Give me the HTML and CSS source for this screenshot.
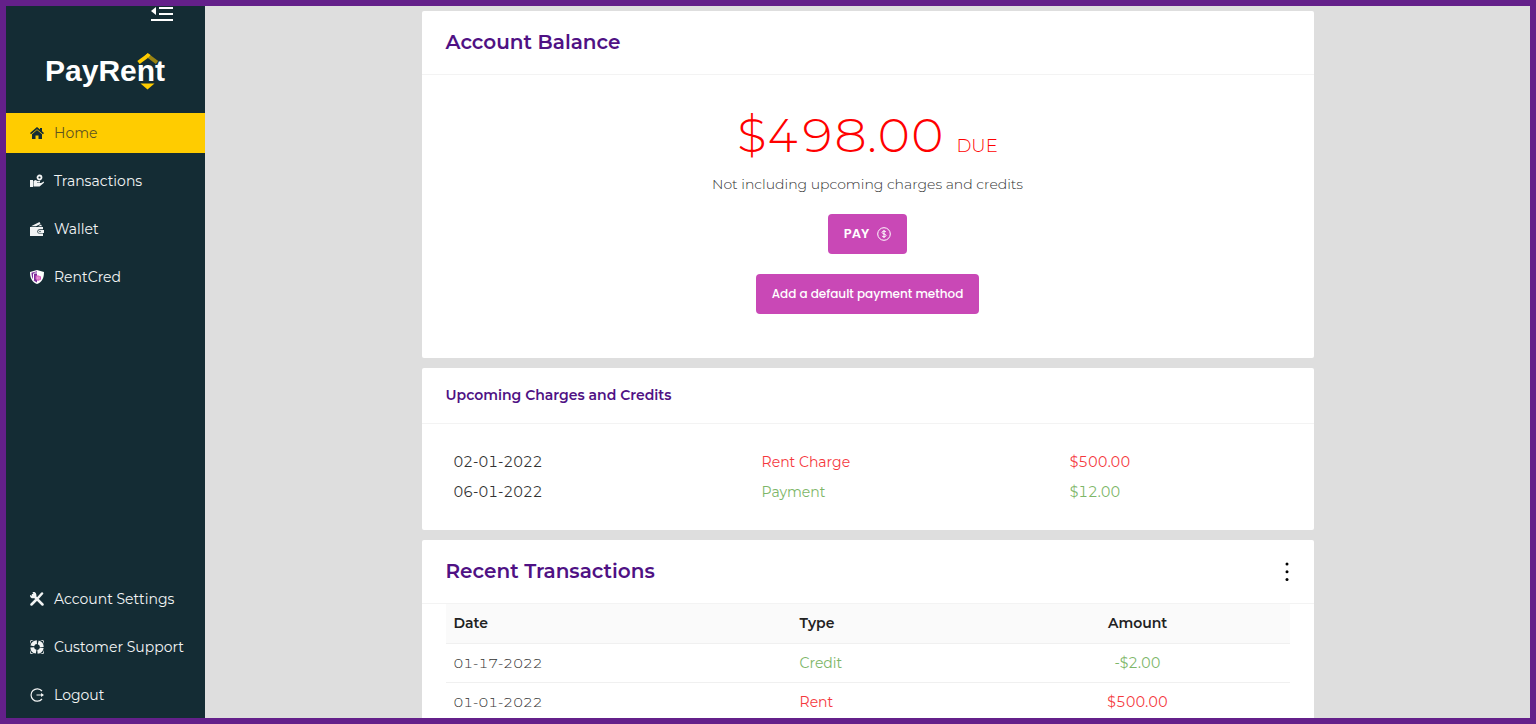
FILE: index.html
```html
<!DOCTYPE html>
<html lang="en">
<head>
    <meta charset="UTF-8">
    <meta name="viewport" content="width=device-width, initial-scale=1.0">
    <title>PayRent</title>
    <link rel="stylesheet" href="styles.css">
</head>
<body>
    <div class="app">
        <aside class="sidebar">
            <button class="collapse" type="button" aria-label="Collapse menu">
                <svg width="22" height="14" viewBox="0 0 22 14">
                    <path d="M0 4l5-4v8z" fill="#fff"/>
                    <path d="M8 1h14M8 7h14M0 13h22" stroke="#fff" stroke-width="2"/>
                </svg>
            </button>

            <a class="logo" href="#">
                <svg width="122" height="38" viewBox="0 0 122 38">
                    <text class="logo-text" x="0" y="28">PayRent</text>
                    <path d="M93.500 9.500l9.500-7" stroke="#ffcc00" stroke-width="4"/>
                    <path d="M102 2l10 7.500" stroke="#9a8412" stroke-width="4"/>
                    <path d="M100 3l2.500-3 3 2-2.500 3z" fill="#ffcc00"/>
                    <path d="M95.500 30.500h14l-7 6z" fill="#ffcc00"/>
                </svg>
            </a>

            <nav class="menu">
                <a class="active" href="#">
                    <svg class="icon" viewBox="0 0 14 14"><path d="M7 1L0 7l1 1.200 6-5 6 5L14 7l-2-1.800V2h-2v1.500z"/><path d="M7 4L2 8.200V13h3.500V9.500h3V13H12V8.200z"/></svg>
                    Home
                </a>
                <a href="#">
                    <svg class="icon" viewBox="0 0 14 14"><path d="M0 6h3v7H0zM3.500 7l2-1 2 1h2.500v1.500H7V9h4l3-1.500c.4 1-.5 1.500-1.500 2.500L9.500 12.500h-6z"/><circle cx="9.500" cy="3.500" r="2" fill="none" stroke="currentColor" stroke-width="1.800"/></svg>
                    Transactions
                </a>
                <a href="#">
                    <svg class="icon" viewBox="0 0 14 14"><path d="M0 5h13v2.200H9.500a2.200 2.200 0 0 0 0 4.400H13V14H0zM1 4.300L9.500 0l1 2L6 4.300zM8 4.300L11 2.500l1 1.800z"/><path d="M9.500 8H14v3H9.500a1.500 1.500 0 0 1 0-3z"/><circle cx="10" cy="9.500" r=".7" fill="#142c34"/></svg>
                    Wallet
                </a>
                <a href="#">
                    <svg class="icon" viewBox="0 0 14 14"><path d="M7 0l7 2c0 6-2 10-7 12C2 12 0 8 0 2z" fill="#fff"/><path d="M7 1.300L1.500 2.800C1.600 7.500 3 11 7 12.500z" fill="#7a2b9b"/><path d="M3.500 10V4l1-1h3l1 1v2" fill="none" stroke="#fff"/><path d="M5.500 5.500h3l2.500 1v3L8 11 5.500 9z" fill="#d557bd"/><path d="M7.200 6.500v3M9 6.500v3" stroke="#fff" stroke-width=".6"/></svg>
                    RentCred
                </a>
            </nav>

            <nav class="menu menu-bottom">
                <a href="#">
                    <svg class="icon" viewBox="0 0 14 14"><path d="M3 3l9.500 9.500M12 1.500L8 6M6.500 7.500l-5 5" fill="none" stroke="currentColor" stroke-width="2.500" stroke-linecap="round"/><path d="M2.500 0A3.200 3.200 0 1 1 0 3l2 .8 1.500-1.500z"/></svg>
                    Account Settings
                </a>
                <a href="#">
                    <svg class="icon" viewBox="0 0 14 14"><circle cx="7" cy="7" r="4.800" fill="none" stroke="currentColor" stroke-width="3.800" stroke-dasharray="6.140 1.400" stroke-dashoffset="-.7"/><path d="M0 4V1.500Q0 0 1.500 0H4L1 1zM10 0h2.500Q14 0 14 1.500V4l-1-3zM14 10v2.500q0 1.500-1.500 1.500H10l3-1zM4 14H1.500Q0 14 0 12.500V10l1 3z"/></svg>
                    Customer Support
                </a>
                <a href="#">
                    <svg class="icon" viewBox="0 0 14 14"><path d="M12 3A6.200 6.200 0 1 0 12 11M6.500 7h6.500" fill="none" stroke="currentColor" stroke-width="1.200"/><path d="M11 5l3 2-3 2z"/></svg>
                    Logout
                </a>
            </nav>
        </aside>

        <main class="content">
            <section class="card">
                <h1>Account Balance</h1>
                <div class="balance">
                    <p class="amount">$498.00 <span class="due">DUE</span></p>
                    <p class="note">Not including upcoming charges and credits</p>
                    <button class="btn btn-pay" type="button">
                        PAY
                        <svg width="14" height="14" viewBox="0 0 14 14" fill="none" stroke="#fff"><circle cx="7" cy="7" r="6.300"/><path d="M9 5C8.500 3.800 5 3.800 5 5.400 5 7.300 9 6.500 9 8.500c0 1.800-3.600 1.700-4.100.3M7 3v8"/></svg>
                    </button>
                    <button class="btn" type="button">Add a default payment method</button>
                </div>
            </section>

            <section class="card">
                <h2>Upcoming Charges and Credits</h2>
                <div class="upcoming">
                    <table>
                        <tr>
                            <td>02-01-2022</td>
                            <td class="charge">Rent Charge</td>
                            <td class="charge">$500.00</td>
                        </tr>
                        <tr>
                            <td>06-01-2022</td>
                            <td class="credit">Payment</td>
                            <td class="credit">$12.00</td>
                        </tr>
                    </table>
                </div>
            </section>

            <section class="card">
                <div class="card-head">
                    <h1>Recent Transactions</h1>
                    <button class="more" type="button" aria-label="More options">
                        <svg width="6" height="20" viewBox="0 0 6 20"><circle cx="3" cy="2" r="1.500"/><circle cx="3" cy="9.700" r="1.500"/><circle cx="3" cy="17.400" r="1.500"/></svg>
                    </button>
                </div>
                <div class="transactions">
                    <table>
                        <thead>
                            <tr>
                                <th>Date</th>
                                <th>Type</th>
                                <th>Amount</th>
                            </tr>
                        </thead>
                        <tbody>
                            <tr>
                                <td>01-17-2022</td>
                                <td class="credit">Credit</td>
                                <td class="credit">-$2.00</td>
                            </tr>
                            <tr>
                                <td>01-01-2022</td>
                                <td class="charge">Rent</td>
                                <td class="charge">$500.00</td>
                            </tr>
                        </tbody>
                    </table>
                </div>
            </section>
        </main>
    </div>
</body>
</html>
```
FILE: styles.css
```css
* {
    box-sizing: border-box;
}
body {
    margin: 0;
    font-family: Montserrat, Inter, sans-serif;
    font-size: 14px;
    font-variant-numeric: tabular-nums;
    color: #333;
}
.app {
    display: flex;
    height: 100vh;
    border: 6px solid #64208a;
    overflow: hidden;
    background-color: #dedede;
}
.sidebar {
    display: flex;
    flex-direction: column;
    flex: 0 0 199px;
    padding-bottom: 3px;
    background-color: #142c34;
}
.collapse {
    align-self: flex-end;
    margin-right: 32px;
    padding: 1px 0;
    border: none;
    background: none;
    line-height: 0;
    cursor: pointer;
}
.logo {
    margin: 31px 0 22px 39px;
    line-height: 0;
}
.logo svg {
    display: block;
}
.logo-text {
    font: bold 30px "Liberation Sans", Arial, sans-serif;
    fill: #fff;
}
.menu {
    display: flex;
    flex-direction: column;
    gap: 8px;
}
.menu a {
    display: flex;
    align-items: center;
    gap: 10px;
    height: 40px;
    padding-left: 24px;
    color: #f2f4f4;
    text-decoration: none;
}
.menu .active {
    background-color: #ffcc00;
    color: #5f5420;
}
.icon {
    width: 14px;
    height: 14px;
    fill: currentColor;
}
.active .icon {
    color: #142c34;
}
.menu-bottom {
    margin-top: auto;
}
.content {
    flex: 1;
    padding: 5px 16px;
    overflow: hidden;
}
.card {
    max-width: 892px;
    margin: 0 auto 10px;
    background-color: #fff;
    border-radius: 2px;
}
h1, h2 {
    margin: 0;
    padding: 0 24px;
    border-bottom: 1px solid #f3f3f3;
    color: #4f1184;
    font-weight: 600;
}
h1 {
    font-size: 20px;
    line-height: 63px;
}
h2 {
    font-size: 14px;
    line-height: 55px;
}
.balance {
    display: flex;
    flex-direction: column;
    align-items: center;
    gap: 20px;
    padding: 30px 24px 44px;
}
.amount {
    margin: 0;
    color: #f00;
    font-size: 48px;
    font-weight: 300;
    line-height: 60px;
}
.due {
    font-size: 18px;
    line-height: 20px;
}
.note {
    margin: -11px 0 0;
    font-weight: 300;
    line-height: 20px;
}
.btn {
    display: flex;
    align-items: center;
    gap: 8px;
    height: 40px;
    padding: 0 16px;
    border: none;
    border-radius: 4px;
    background-color: #c948b6;
    color: #fff;
    font-family: Poppins, Inter, sans-serif;
    font-size: 12px;
    font-weight: 500;
    cursor: pointer;
}
.btn-pay {
    font-size: 13px;
    font-weight: 600;
}
table {
    width: 100%;
    border-collapse: collapse;
    table-layout: fixed;
}
th, td {
    padding: 0 8px;
    text-align: left;
}
th {
    font-weight: 600;
    color: #222;
}
.upcoming {
    padding: 23px 24px;
}
.upcoming td {
    height: 30px;
}
.upcoming td:last-child {
    width: 27%;
}
.card-head {
    display: flex;
    align-items: center;
    justify-content: space-between;
    padding-right: 24px;
}
.card-head h1 {
    border-bottom: none;
}
.more {
    padding: 0;
    border: none;
    background: none;
    line-height: 0;
    cursor: pointer;
}
.transactions {
    padding: 0 24px 24px;
    border-top: 1px solid #f3f3f3;
}
.transactions tr {
    height: 39px;
    border-bottom: 1px solid #f0f0f0;
}
.transactions th {
    background-color: #fafafa;
}
.transactions th:first-child {
    width: 41%;
}
.transactions th:last-child {
    width: 36%;
}
.transactions th:last-child,
.transactions td:last-child {
    text-align: center;
}
.transactions td {
    font-weight: 300;
}
.upcoming .charge,
.transactions .charge {
    color: #f5383d;
    font-weight: 400;
}
.upcoming .credit,
.transactions .credit {
    color: #7db667;
    font-weight: 400;
}
```
